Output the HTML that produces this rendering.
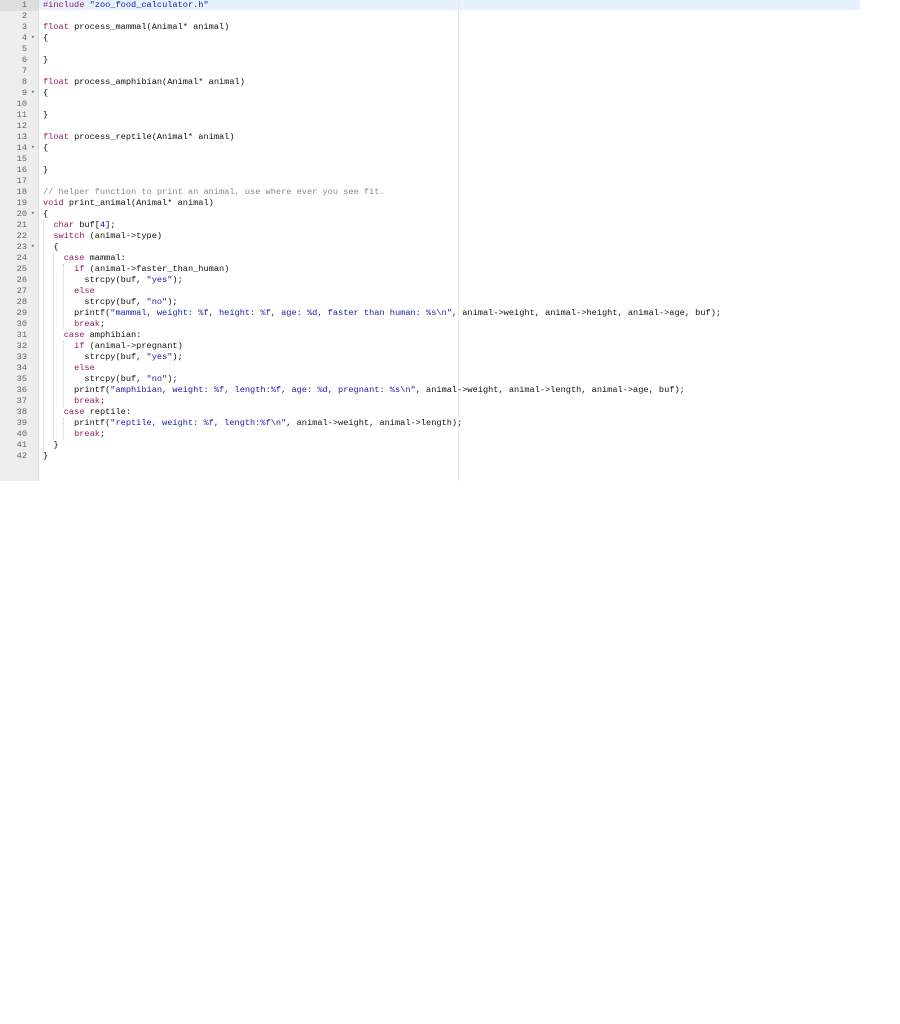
<!DOCTYPE html>
<html><head><style>
body{margin:0;background:#fff;width:900px;height:1024px;overflow:hidden}
#ed{position:absolute;left:0;top:0;width:860px;height:481px;font-family:"Liberation Mono",monospace;font-size:8.65px;line-height:11px;color:#111}
#gut{position:absolute;left:0;top:0;width:38px;height:481px;background:#ededed;border-right:1px solid #d9d9d9;color:#666}
.g{height:11px;text-align:right;padding-right:11px;position:relative}
.g.a{background:#dedede}
.g .f{position:absolute;right:3px;top:0;font-size:7px;color:#777}
#act{position:absolute;left:39px;top:0;width:821px;height:10px;background:#e8f2fe}
#pm{position:absolute;left:458px;top:0;width:1px;height:481px;background:#e8e8e8}
#code{position:absolute;left:43px;top:0;white-space:pre}
.k{color:#931a68}.s{color:#1a1aa6}.c{color:#8a8a8a}.n{color:#0000cd}
.ig{position:absolute;width:0;border-left:1px dotted #ccc}
</style></head><body>
<div id="ed">
<div id="act"></div>
<div id="pm"></div>
<div id="gut">
<div class="g a">1</div><div class="g">2</div><div class="g">3</div><div class="g">4<span class="f">▾</span></div><div class="g">5</div><div class="g">6</div><div class="g">7</div><div class="g">8</div><div class="g">9<span class="f">▾</span></div><div class="g">10</div><div class="g">11</div><div class="g">12</div><div class="g">13</div><div class="g">14<span class="f">▾</span></div><div class="g">15</div><div class="g">16</div><div class="g">17</div><div class="g">18</div><div class="g">19</div><div class="g">20<span class="f">▾</span></div><div class="g">21</div><div class="g">22</div><div class="g">23<span class="f">▾</span></div><div class="g">24</div><div class="g">25</div><div class="g">26</div><div class="g">27</div><div class="g">28</div><div class="g">29</div><div class="g">30</div><div class="g">31</div><div class="g">32</div><div class="g">33</div><div class="g">34</div><div class="g">35</div><div class="g">36</div><div class="g">37</div><div class="g">38</div><div class="g">39</div><div class="g">40</div><div class="g">41</div><div class="g">42</div>
</div>
<div class="ig" style="left:43px;top:220px;height:231px"></div>
<div class="ig" style="left:53px;top:253px;height:187px"></div>
<div class="ig" style="left:63px;top:264px;height:66px"></div>
<div class="ig" style="left:63px;top:341px;height:66px"></div>
<div class="ig" style="left:63px;top:418px;height:22px"></div>
<div id="code"><span class="k">#include</span> <span class="s">"zoo_food_calculator.h"</span>

<span class="k">float</span> process_mammal(Animal* animal)
{

}

<span class="k">float</span> process_amphibian(Animal* animal)
{

}

<span class="k">float</span> process_reptile(Animal* animal)
{

}

<span class="c">// helper function to print an animal, use where ever you see fit.</span>
<span class="k">void</span> print_animal(Animal* animal)
{
  <span class="k">char</span> buf[<span class="n">4</span>];
  <span class="k">switch</span> (animal-&gt;type)
  {
    <span class="k">case</span> mammal:
      <span class="k">if</span> (animal-&gt;faster_than_human)
        strcpy(buf, <span class="s">"yes"</span>);
      <span class="k">else</span>
        strcpy(buf, <span class="s">"no"</span>);
      printf(<span class="s">"mammal, weight: %f, height: %f, age: %d, faster than human: %s\n"</span>, animal-&gt;weight, animal-&gt;height, animal-&gt;age, buf);
      <span class="k">break</span>;
    <span class="k">case</span> amphibian:
      <span class="k">if</span> (animal-&gt;pregnant)
        strcpy(buf, <span class="s">"yes"</span>);
      <span class="k">else</span>
        strcpy(buf, <span class="s">"no"</span>);
      printf(<span class="s">"amphibian, weight: %f, length:%f, age: %d, pregnant: %s\n"</span>, animal-&gt;weight, animal-&gt;length, animal-&gt;age, buf);
      <span class="k">break</span>;
    <span class="k">case</span> reptile:
      printf(<span class="s">"reptile, weight: %f, length:%f\n"</span>, animal-&gt;weight, animal-&gt;length);
      <span class="k">break</span>;
  }
}</div>
</div>
</body></html>
